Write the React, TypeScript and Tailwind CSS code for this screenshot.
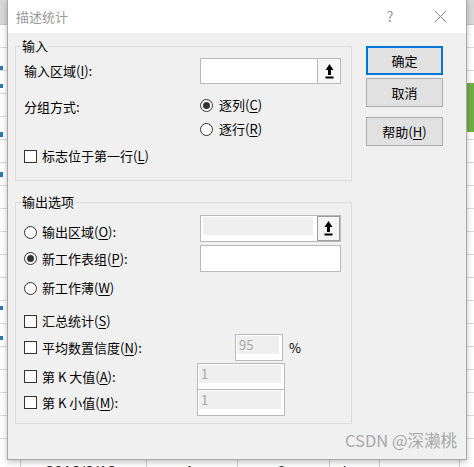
import React from "react";

const U = ({ c }: { c: string }) => (
  <span className="underline underline-offset-[2px] decoration-[1px]">{c}</span>
);

function Radio({ checked }: { checked?: boolean }) {
  return (
    <span className="w-[13px] h-[13px] rounded-full border border-[#333333] bg-white flex items-center justify-center shrink-0">
      {checked && <span className="w-[7px] h-[7px] rounded-full bg-[#333333]" />}
    </span>
  );
}

function Check() {
  return <span className="w-[13px] h-[13px] border border-[#333333] bg-white shrink-0" />;
}

function ArrowIcon() {
  return (
    <svg width="9" height="15" viewBox="0 0 9 15">
      <path d="M4.5 0 L8.5 6 H6 V11 H3 V6 H0.5 Z" fill="#000" />
      <rect x="0.5" y="12.5" width="8" height="2" fill="#000" />
    </svg>
  );
}

function RefEdit({ disabled }: { disabled?: boolean }) {
  return (
    <div className="w-[141px] h-[27px] border border-[#b9b9b9] bg-white flex shrink-0">
      <div className="flex-1 pt-[1px] pl-[2px] pr-[4px] pb-[6px]">
        {disabled && <div className="h-full bg-[#efefef]" />}
      </div>
      <div
        className={
          disabled
            ? "w-[23px] h-full border border-[#9c9c9c] bg-[#f4f4f4] flex items-center justify-center"
            : "w-[23px] h-full border-l border-[#b9b9b9] bg-[#f7f7f7] flex items-center justify-center"
        }
      >
        <ArrowIcon />
      </div>
    </div>
  );
}

function Field({ w, value }: { w: string; value: string }) {
  return (
    <div className={`${w} h-[27px] border border-[#b9b9b9] bg-white pt-[1px] pl-[1px] pr-[3px] pb-[6px] shrink-0`}>
      <div className="h-full bg-[#efefef] text-[13px] leading-[18px] text-[#a8a8a8] pl-[2px]">{value}</div>
    </div>
  );
}

function Group({
  label,
  className,
  children,
}: {
  label: string;
  className: string;
  children: React.ReactNode;
}) {
  return (
    <div className={`relative border border-[#dcdcdc] pl-[8px] ${className}`}>
      <span className="absolute left-[6px] top-[-10px] bg-[#f0f0f0] leading-[18px] text-[13px] text-black">
        {label}
      </span>
      {children}
    </div>
  );
}

function Btn({ children, primary, className = "" }: { children: React.ReactNode; primary?: boolean; className?: string }) {
  return (
    <div
      className={`w-[77px] h-[29px] bg-[#e1e1e1] flex items-center justify-center text-[13px] text-black ${
        primary ? "border-2 border-[#0078d7]" : "border border-[#adadad]"
      } ${className}`}
    >
      {children}
    </div>
  );
}

export default function App() {
  const rows = Array.from({ length: 19 });
  return (
    <div
      className="relative w-[474px] h-[467px] overflow-hidden bg-white"
      style={{ fontFamily: '"Noto Sans CJK SC", "Noto Sans", sans-serif' }}
    >
      {/* spreadsheet background */}
      <div className="absolute inset-0 flex flex-col">
        <div className="h-[25px] bg-[#d8d8d8] border-b border-[#c6c6c6] shrink-0" />
        {rows.map((_, i) => (
          <div key={i} className="h-[23px] border-b border-[#d9d9d9] shrink-0" />
        ))}
      </div>
      <div className="absolute left-[466px] top-[83px] w-[8px] h-[49px] bg-[#70ad47]" />
      <div className="absolute left-0 top-[66px] w-[3px] h-[4px] bg-[#2e75b6]" />
      <div className="absolute left-0 top-[84px] w-[3px] h-[4px] bg-[#2e75b6]" />
      <div className="absolute left-0 top-[132px] w-[3px] h-[5px] bg-[#2e75b6]" />
      <div className="absolute left-0 top-[172px] w-[3px] h-[5px] bg-[#2e75b6]" />
      <div className="absolute left-0 top-[306px] w-[3px] h-[4px] bg-[#2e75b6]" />
      <div className="absolute left-0 top-[336px] w-[3px] h-[4px] bg-[#2e75b6]" />
      {/* bottom visible spreadsheet row */}
      <div
        className="absolute left-0 top-[459px] w-[474px] h-[30px] flex text-[16px] text-[#222] bg-white"
        style={{ fontFamily: '"Liberation Sans", sans-serif' }}
      >
        <div className="w-[21px] border-r border-[#d0d0d0]" />
        <div className="w-[126px] border-r border-[#d0d0d0] pl-[24px] pt-[2px]">2019/9/18</div>
        <div className="w-[91px] border-r border-[#d0d0d0] pl-[38px] pt-[2px]">1</div>
        <div className="w-[92px] border-r border-[#d0d0d0] pl-[39px] pt-[2px]">0</div>
        <div className="w-[50px] border-r border-[#d0d0d0] pl-[11px] pt-[2px]">/</div>
        <div className="w-[80px] border-r border-[#d0d0d0]" />
      </div>

      {/* dialog */}
      <div className="absolute left-[7px] top-0 w-[460px] h-[460px] border-x border-b border-[#a8a8a8] bg-[#f0f0f0] shadow-[0_2px_6px_rgba(0,0,0,0.25)] flex flex-col">
        <div className="h-[33px] bg-white flex items-center pl-[8px] pr-[16px] shrink-0">
          <span className="flex-1 text-[13px] text-[#999999]">描述统计</span>
          <span className="w-[20px] text-center text-[14px] text-[#999999]">?</span>
          <span className="w-[20px] ml-[30px] flex items-center justify-center">
            <svg width="13" height="13" viewBox="0 0 13 13">
              <path d="M1 1 L12 12 M12 1 L1 12" stroke="#8a8a8a" strokeWidth="1" />
            </svg>
          </span>
        </div>

        <div className="flex pl-[7px] pt-[13px] text-[13px] text-black">
          <div className="w-[337px] flex flex-col">
            <Group label="输入" className="pt-[11px] pb-[14px]">
              <div className="flex items-center h-[26px]">
                <span className="w-[176px]">
                  输入区域(<U c="I" />):
                </span>
                <div className="h-[26px] flex">
                  <div className="w-[141px] h-[26px] border border-[#b9b9b9] bg-white flex">
                    <div className="flex-1" />
                    <div className="w-[23px] h-full border-l border-[#b9b9b9] bg-[#f7f7f7] flex items-center justify-center">
                      <ArrowIcon />
                    </div>
                  </div>
                </div>
              </div>
              <div className="mt-[11px] flex">
                <span className="w-[176px] h-[20px] flex items-center pt-[3px]">分组方式:</span>
                <div className="flex flex-col gap-[4px]">
                  <div className="h-[20px] flex items-center gap-[6px]">
                    <Radio checked />
                    <span>
                      逐列(<U c="C" />)
                    </span>
                  </div>
                  <div className="h-[20px] flex items-center gap-[6px]">
                    <Radio />
                    <span>
                      逐行(<U c="R" />)
                    </span>
                  </div>
                </div>
              </div>
              <div className="mt-[7px] h-[20px] flex items-center gap-[5px]">
                <Check />
                <span>
                  标志位于第一行(<U c="L" />)
                </span>
              </div>
            </Group>

            <Group label="输出选项" className="mt-[21px] pt-[12px] pb-[7px]">
              <div className="h-[27px] flex">
                <div className="w-[176px] h-[20px] self-end flex items-center gap-[5px]">
                  <Radio />
                  <span>
                    输出区域(<U c="O" />):
                  </span>
                </div>
                <RefEdit disabled />
              </div>
              <div className="mt-[3px] h-[27px] flex items-center">
                <div className="w-[176px] h-[20px] flex items-center gap-[5px]">
                  <Radio checked />
                  <span>
                    新工作表组(<U c="P" />):
                  </span>
                </div>
                <div className="w-[141px] h-[27px] border border-[#b9b9b9] bg-white" />
              </div>
              <div className="mt-[6px] h-[20px] flex items-center gap-[5px]">
                <Radio />
                <span>
                  新工作薄(<U c="W" />)
                </span>
              </div>
              <div className="mt-[13px] h-[20px] flex items-center gap-[5px]">
                <Check />
                <span>
                  汇总统计(<U c="S" />)
                </span>
              </div>
              <div className="mt-[3px] h-[27px] flex items-center">
                <div className="w-[211px] flex items-center gap-[5px]">
                  <Check />
                  <span>
                    平均数置信度(<U c="N" />):
                  </span>
                </div>
                <Field w="w-[48px]" value="95" />
                <span className="ml-[6px]">%</span>
              </div>
              <div className="mt-[2px] h-[27px] flex items-center">
                <div className="w-[173px] flex items-center gap-[5px]">
                  <Check />
                  <span className="whitespace-pre">
                    第 K 大值(<U c="A" />):
                  </span>
                </div>
                <Field w="w-[88px]" value="1" />
              </div>
              <div className="-mt-[1px] h-[27px] flex items-center">
                <div className="w-[173px] flex items-center gap-[5px]">
                  <Check />
                  <span className="whitespace-pre">
                    第 K 小值(<U c="M" />):
                  </span>
                </div>
                <Field w="w-[88px]" value="1" />
              </div>
            </Group>
          </div>

          <div className="ml-[14px] flex flex-col">
            <Btn primary>确定</Btn>
            <Btn className="mt-[3px]">取消</Btn>
            <Btn className="mt-[10px]">
              帮助(<U c="H" />)
            </Btn>
          </div>
        </div>
      </div>

      {/* watermark */}
      <div className="absolute left-[345px] top-[428px] text-[16.5px] leading-[24px] text-[#a8a8a8] whitespace-nowrap">
        CSDN @深濑桃
      </div>
    </div>
  );
}
